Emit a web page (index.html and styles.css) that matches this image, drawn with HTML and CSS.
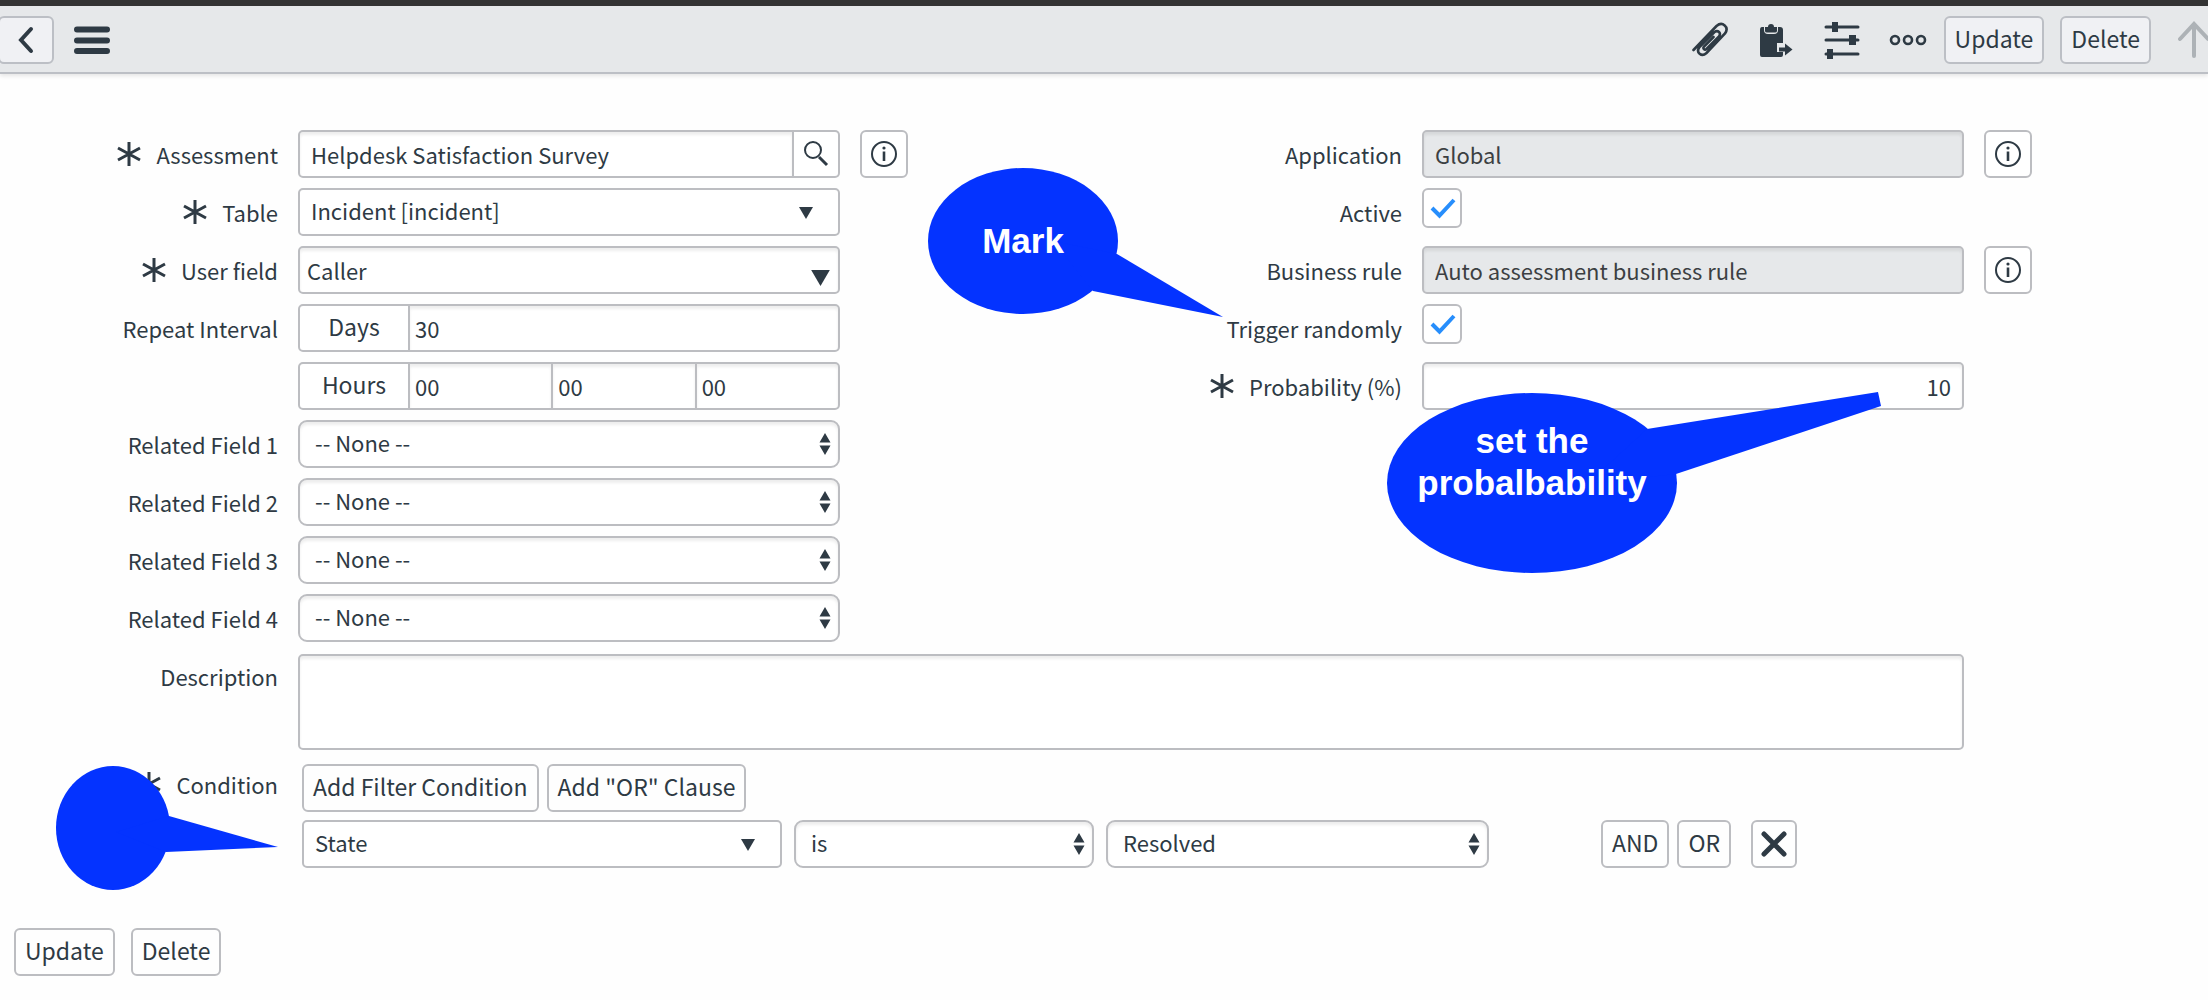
FILE: index.html
```html
<!DOCTYPE html>
<html lang="en">
<head>
    <meta charset="utf-8">
    <title>Trigger Condition</title>
    <link rel="stylesheet" href="styles.css">
</head>
<body>
    <!-- shared icons -->
    <svg class="sprite" aria-hidden="true">
        <symbol id="star" viewBox="0 0 24 24"><path d="M12 0v24M1 6l22 12M23 6L1 18" stroke="#2e3a44" stroke-width="3"/></symbol>
        <symbol id="info" viewBox="0 0 28 28"><circle cx="14" cy="14" r="12" fill="none" stroke="#2e3a44" stroke-width="2"/><circle cx="14" cy="8" r="1.6" fill="#2e3a44"/><path d="M14 11.500v9.500" stroke="#2e3a44" stroke-width="2.600"/></symbol>
        <symbol id="down" viewBox="0 0 14 12"><path d="M0 0h14L7 12z" fill="#2e3a44"/></symbol>
        <symbol id="updown" viewBox="0 0 12 24"><path d="M6 1l5.500 9.500h-11zM6 23l5.500-9.500h-11z" fill="#2e3a44"/></symbol>
        <symbol id="check" viewBox="0 0 28 22"><path d="M3 11l7.500 7.500L25 3" fill="none" stroke="#278efc" stroke-width="4"/></symbol>
    </svg>

    <header class="toolbar">
        <button class="btn back" aria-label="Back"><svg width="16" height="28" viewBox="0 0 16 28"><path d="M13 3L3 14l10 11" fill="none" stroke="#2e3a44" stroke-width="4" stroke-linecap="round"/></svg></button>
        <button class="icon-btn menu" aria-label="Menu"><svg width="36" height="28" viewBox="0 0 36 28"><path d="M3 3.500h30M3 14.500h30M3 25h30" stroke="#2e3a44" stroke-width="6" stroke-linecap="round"/></svg></button>
        <div class="tools">
            <button class="icon-btn" aria-label="Attachments"><svg width="36" height="36" viewBox="0 0 36 36"><path d="M1.500 28L24.500 4c6-5 13 1 8.500 7.500L14.500 31c-5 4.500-11-.5-7-6L22.500 10c3.500-2.500 7 1 4.500 4.500L14.500 27c-2 1.500-4-.5-2.500-2.500L21.500 15" fill="none" stroke="#2e3a44" stroke-width="2.600" stroke-linecap="round"/></svg></button>
            <button class="icon-btn" aria-label="Copy record"><svg width="34" height="36" viewBox="0 0 34 36"><path d="M3 5h2v3q0 4 4 4h6q4 0 4-4V5h2q3 0 3 3v13h-6v9h6v3q0 2-2 2H3q-2 0-2-2V8q0-3 2-3z" fill="#2e3a44"/><path d="M6 9V5h3q0-3 3-3t3 3h3v4q0 1.500-2 1.500H8Q6 10.500 6 9z" fill="#2e3a44"/><path d="M20 27.500h8" stroke="#2e3a44" stroke-width="4"/><path d="M26 21.500l7.500 6-7.500 6z" fill="#2e3a44"/></svg></button>
            <button class="icon-btn" aria-label="Settings"><svg width="36" height="38" viewBox="0 0 36 38"><path d="M2 6h32M2 19h32M2 33h32" stroke="#2e3a44" stroke-width="3" stroke-linecap="round"/><path d="M8 1h6v10H8zM25 14h7v10h-7zM3 28h6v10H3z" fill="#2e3a44"/></svg></button>
            <button class="icon-btn" aria-label="More options"><svg width="38" height="12" viewBox="0 0 38 12"><g fill="none" stroke="#2e3a44" stroke-width="2.600"><circle cx="6" cy="6" r="4"/><circle cx="19" cy="6" r="4"/><circle cx="32" cy="6" r="4"/></g></svg></button>
            <button class="btn">Update</button>
            <button class="btn">Delete</button>
            <button class="icon-btn up" aria-label="Previous record"><svg width="30" height="38" viewBox="0 0 30 38"><path d="M16 35V3M2 18L16 3l14 15" fill="none" stroke="#adb2b6" stroke-width="4" stroke-linecap="round"/></svg></button>
        </div>
    </header>

    <form class="record">
        <div class="columns">
            <div class="column">
                <div class="row">
                    <label for="assessment"><svg class="star"><use href="#star"/></svg>Assessment</label>
                    <div class="group">
                        <input class="control" type="text" id="assessment" value="Helpdesk Satisfaction Survey">
                        <button type="button" class="lookup" aria-label="Look up"><svg width="28" height="28" viewBox="0 0 28 28"><circle cx="11" cy="10" r="8" fill="none" stroke="#2e3a44" stroke-width="2"/><path d="M17 17l8 8" stroke="#2e3a44" stroke-width="3"/></svg></button>
                    </div>
                    <button type="button" class="info" aria-label="Preview assessment"><svg><use href="#info"/></svg></button>
                </div>
                <div class="row">
                    <label for="table"><svg class="star"><use href="#star"/></svg>Table</label>
                    <div class="select picker">
                        <select class="control" id="table"><option>Incident [incident]</option></select>
                        <svg class="down"><use href="#down"/></svg>
                    </div>
                </div>
                <div class="row">
                    <label for="userField"><svg class="star"><use href="#star"/></svg>User field</label>
                    <div class="select tree">
                        <select class="control" id="userField"><option>Caller</option></select>
                        <svg class="down"><use href="#down"/></svg>
                    </div>
                </div>
                <div class="row">
                    <label for="days">Repeat Interval</label>
                    <div class="group interval">
                        <span class="unit">Days</span>
                        <input class="control" type="text" id="days" value="30">
                    </div>
                </div>
                <div class="row">
                    <div class="group interval hours">
                        <span class="unit">Hours</span>
                        <input class="control" type="text" aria-label="Hours" value="00">
                        <input class="control" type="text" aria-label="Minutes" value="00">
                        <input class="control" type="text" aria-label="Seconds" value="00">
                    </div>
                </div>
                <div class="row">
                    <label for="related1">Related Field 1</label>
                    <div class="select">
                        <select class="control" id="related1"><option>-- None --</option></select>
                        <svg class="updown"><use href="#updown"/></svg>
                    </div>
                </div>
                <div class="row">
                    <label for="related2">Related Field 2</label>
                    <div class="select">
                        <select class="control" id="related2"><option>-- None --</option></select>
                        <svg class="updown"><use href="#updown"/></svg>
                    </div>
                </div>
                <div class="row">
                    <label for="related3">Related Field 3</label>
                    <div class="select">
                        <select class="control" id="related3"><option>-- None --</option></select>
                        <svg class="updown"><use href="#updown"/></svg>
                    </div>
                </div>
                <div class="row">
                    <label for="related4">Related Field 4</label>
                    <div class="select">
                        <select class="control" id="related4"><option>-- None --</option></select>
                        <svg class="updown"><use href="#updown"/></svg>
                    </div>
                </div>
            </div>

            <div class="column">
                <div class="row">
                    <label for="application">Application</label>
                    <input class="control" type="text" id="application" value="Global" readonly>
                    <button type="button" class="info" aria-label="Preview application"><svg><use href="#info"/></svg></button>
                </div>
                <div class="row">
                    <label for="active">Active</label>
                    <div class="checkbox"><input type="checkbox" id="active" checked><svg><use href="#check"/></svg></div>
                </div>
                <div class="row">
                    <label for="rule">Business rule</label>
                    <input class="control" type="text" id="rule" value="Auto assessment business rule" readonly>
                    <button type="button" class="info" aria-label="Preview business rule"><svg><use href="#info"/></svg></button>
                </div>
                <div class="row">
                    <label for="random">Trigger randomly</label>
                    <div class="checkbox"><input type="checkbox" id="random" checked><svg><use href="#check"/></svg></div>
                </div>
                <div class="row">
                    <label for="probability"><svg class="star"><use href="#star"/></svg>Probability (%)</label>
                    <input class="control number" type="text" id="probability" value="10">
                </div>
            </div>
        </div>

        <div class="row description">
            <label for="description">Description</label>
            <textarea class="control" id="description"></textarea>
        </div>

        <div class="row conditions">
            <label for="conditionField"><svg class="star"><use href="#star"/></svg>Condition</label>
            <div class="condition">
                <div class="actions">
                    <button type="button" class="btn small">Add Filter Condition</button>
                    <button type="button" class="btn small">Add "OR" Clause</button>
                </div>
                <div class="filter">
                    <div class="select picker">
                        <select class="control" id="conditionField"><option>State</option></select>
                        <svg class="down"><use href="#down"/></svg>
                    </div>
                    <div class="select">
                        <select class="control" aria-label="Operator"><option>is</option></select>
                        <svg class="updown"><use href="#updown"/></svg>
                    </div>
                    <div class="select">
                        <select class="control" aria-label="Value"><option>Resolved</option></select>
                        <svg class="updown"><use href="#updown"/></svg>
                    </div>
                    <div class="clauses">
                        <button type="button" class="btn small">AND</button>
                        <button type="button" class="btn small">OR</button>
                        <button type="button" class="btn remove" aria-label="Remove condition"><svg width="26" height="26" viewBox="0 0 26 26"><path d="M3 3l20 20M23 3L3 23" stroke="#2e3a44" stroke-width="5" stroke-linecap="round"/></svg></button>
                    </div>
                </div>
            </div>
        </div>

        <div class="footer">
            <button type="button" class="btn">Update</button>
            <button type="button" class="btn">Delete</button>
        </div>
    </form>

    <!-- annotations over the form -->
    <div class="callout mark">
        <svg width="296" height="150" viewBox="0 0 296 150"><ellipse cx="95" cy="73" rx="95" ry="73"/><path d="M189 86l106 63-130-26-40-50z"/></svg>
        <p>Mark</p>
    </div>
    <div class="callout probability">
        <svg width="495" height="182" viewBox="0 0 495 182"><ellipse cx="145" cy="91" rx="145" ry="90"/><path d="M260 37L491 0l3 14-205 68-89 10z"/></svg>
        <p>set the<br>probalbability</p>
    </div>
    <div class="callout state">
        <svg width="222" height="126" viewBox="0 0 222 126"><ellipse cx="57" cy="63" rx="57" ry="62"/><path d="M113 51l109 31-112 5-50-20z"/></svg>
    </div>
</body>
</html>
```
FILE: styles.css
```css
* {
    box-sizing: border-box;
}

body {
    position: relative;
    margin: 0;
    overflow-x: hidden;
    background-color: #fefefe;
    color: #2e3a44;
    font-family: "Noto Sans CJK SC", "Source Sans Pro", sans-serif;
    font-size: 22px;
    line-height: 32px;
}

button,
input,
select,
textarea {
    margin: 0;
    color: inherit;
    font: inherit;
}

.sprite {
    position: absolute;
    width: 0;
    height: 0;
}

/* Toolbar */
.toolbar {
    display: flex;
    align-items: center;
    height: 74px;
    padding-top: 2px;
    background-color: #e6e8ea;
    border-top: 6px solid #333;
    border-bottom: 2px solid #bcbfc5;
    box-shadow: 0 2px 4px rgba(0, 0, 0, 0.1);
}

.tools {
    display: flex;
    align-items: center;
    margin-left: auto;
}

.tools .btn {
    margin-left: 16px;
}

.tools .icon-btn + .btn {
    margin-left: 3px;
}

.btn {
    height: 48px;
    padding: 0 9px 4px;
    background-color: transparent;
    border: 2px solid #bcbdc1;
    border-radius: 6px;
    font-size: 23px;
    white-space: nowrap;
    cursor: pointer;
}

.toolbar .btn {
    background-color: #f0f1f4;
    border-color: #bcbfc5;
}

.btn.small {
    padding: 0 9px 4px;
}

.btn svg,
.icon-btn svg,
.lookup svg,
.info svg {
    display: block;
    margin: 0 auto;
}

.toolbar .back {
    width: 56px;
    margin-left: -2px;
    padding: 0;
}

.icon-btn {
    width: 66px;
    padding: 0;
    background: none;
    border: none;
    cursor: pointer;
}

.icon-btn.menu {
    width: 36px;
    margin-left: 20px;
}

.icon-btn.up {
    width: 30px;
    margin-left: 27px;
}

/* Form */
.record {
    padding: 56px 176px 16px 0;
}

.columns {
    display: grid;
    grid-template-columns: 1fr 1fr;
    gap: 216px;
}

.column {
    display: flex;
    flex-direction: column;
    gap: 10px;
}

.row {
    display: grid;
    grid-template-columns: 278px 1fr 48px;
    column-gap: 20px;
    align-items: start;
    min-height: 48px;
}

label {
    display: flex;
    justify-content: flex-end;
    align-items: center;
    padding: 8px 0;
}

.star {
    width: 24px;
    height: 24px;
    margin-right: 15px;
}

.control {
    display: block;
    width: 100%;
    min-width: 0;
    height: 48px;
    padding: 0 11px;
    background-color: #fff;
    border: 2px solid #bcbdc1;
    border-radius: 5px;
    box-shadow: inset 0 3px 3px rgba(0, 0, 0, 0.07);
    outline: none;
}

.control[readonly] {
    background-color: #e6e8ea;
    color: #3c3f42;
}

.number {
    text-align: right;
}

.group {
    display: flex;
}

.group .control {
    border-radius: 0;
}

.group .control:last-child {
    border-radius: 0 5px 5px 0;
}

.group .control:first-child {
    border-radius: 5px 0 0 5px;
}

.lookup {
    flex: none;
    width: 46px;
    height: 48px;
    padding: 0;
    background-color: #fff;
    border: 2px solid #bcbdc1;
    border-left: none;
    border-radius: 0 5px 5px 0;
}

.info {
    width: 48px;
    height: 48px;
    padding: 0;
    background-color: #fff;
    border: 2px solid #bcbdc1;
    border-radius: 6px;
}

.info svg {
    width: 28px;
    height: 28px;
}

.interval .control {
    flex: 1;
    margin-left: -2px;
    padding: 0 5px;
}

.unit {
    flex: none;
    width: 112px;
    height: 48px;
    padding-top: 4px;
    background-color: #fff;
    border: 2px solid #bcbdc1;
    border-radius: 5px 0 0 5px;
    font-size: 23px;
    text-align: center;
}

.hours {
    grid-column: 2;
}

/* Drop-downs */
.select {
    position: relative;
}

.select .control {
    padding: 0 30px 4px 15px;
    border-radius: 9px;
    appearance: none;
}

.select svg {
    position: absolute;
    pointer-events: none;
}

.updown {
    top: 12px;
    right: 9px;
    width: 12px;
    height: 24px;
}

.picker .control {
    padding-left: 11px;
    border-radius: 5px;
    box-shadow: none;
}

.picker .down {
    top: 19px;
    right: 27px;
    width: 14px;
    height: 12px;
}

.tree .control {
    padding: 0 30px 0 7px;
    border-radius: 5px;
}

.tree .down {
    top: 24px;
    right: 10px;
    width: 19px;
    height: 16px;
}

.checkbox {
    position: relative;
    width: 40px;
    height: 40px;
}

.checkbox input {
    display: block;
    width: 40px;
    height: 40px;
    background-color: #fff;
    border: 2px solid #bcbdc1;
    border-radius: 6px;
    appearance: none;
}

.checkbox svg {
    position: absolute;
    top: 9px;
    left: 7px;
    width: 28px;
    height: 22px;
    pointer-events: none;
}

.description {
    margin: 12px 0 14px;
}

.description label {
    padding-top: 6px;
}

.conditions label {
    padding-top: 4px;
}

textarea.control {
    height: 96px;
    padding: 8px 11px;
    resize: none;
}

/* Condition builder */
.condition {
    display: flex;
    flex-direction: column;
    gap: 8px;
    padding-left: 4px;
}

.actions {
    display: flex;
    gap: 8px;
}

.filter {
    display: grid;
    grid-template-columns: 480fr 300fr 383fr 463fr;
    column-gap: 12px;
}

.clauses {
    display: flex;
    gap: 8px;
    padding-left: 100px;
}

.remove.btn {
    width: 46px;
    margin-left: 12px;
    padding: 0;
}

.footer {
    display: flex;
    gap: 16px;
    margin-top: 60px;
    padding-left: 14px;
}

/* Callouts */
.callout {
    position: absolute;
    color: #fff;
    font: bold 35px/42px "Liberation Sans", Arial, sans-serif;
    text-align: center;
    pointer-events: none;
}

.callout svg {
    display: block;
    fill: #0433ff;
}

.callout p {
    position: absolute;
    left: 0;
    margin: 0;
}

.callout.mark {
    top: 168px;
    left: 928px;
}

.mark p {
    top: 52px;
    width: 190px;
}

.callout.probability {
    top: 392px;
    left: 1387px;
}

.probability p {
    top: 28px;
    width: 290px;
}

.callout.state {
    top: 765px;
    left: 56px;
}
```
